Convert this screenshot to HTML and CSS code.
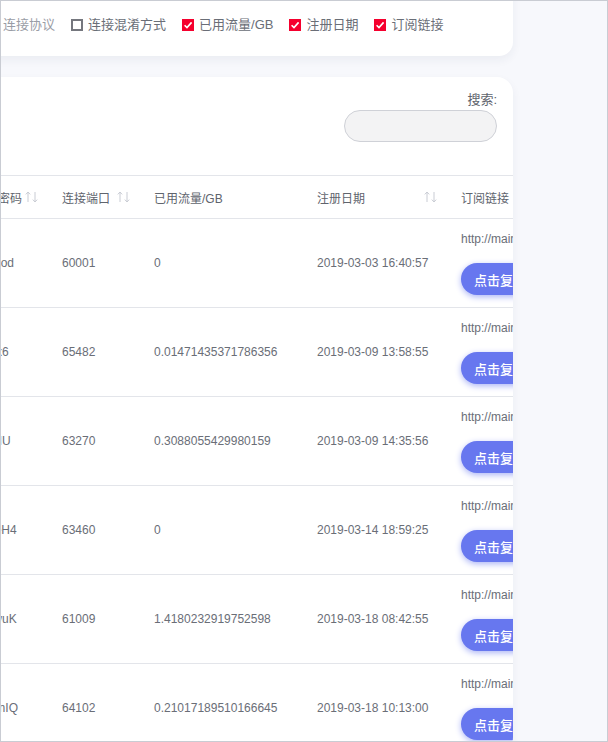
FILE: index.html
```html
<!DOCTYPE html>
<html lang="zh-CN">
<head>
  <meta charset="UTF-8">
  <meta name="viewport" content="width=device-width, initial-scale=1.0">
  <title>用户列表</title>
  <link rel="stylesheet" href="styles.css">
</head>
<body>

<div class="frame">
  <div class="main">

    <!-- 列显示开关 -->
    <div class="card card-filters">
      <div class="col-toggles">
        <label class="toggle muted">连接协议</label>
        <label class="toggle"><span class="box"></span>连接混淆方式</label>
        <label class="toggle"><span class="box checked"><svg width="12" height="12" viewBox="0 0 12 12"><polyline points="2.6,6.2 5,8.6 9.6,3.4" /></svg></span>已用流量/GB</label>
        <label class="toggle"><span class="box checked"><svg width="12" height="12" viewBox="0 0 12 12"><polyline points="2.6,6.2 5,8.6 9.6,3.4" /></svg></span>注册日期</label>
        <label class="toggle"><span class="box checked"><svg width="12" height="12" viewBox="0 0 12 12"><polyline points="2.6,6.2 5,8.6 9.6,3.4" /></svg></span>订阅链接</label>
      </div>
    </div>

    <!-- 用户表格 -->
    <div class="card card-table">
      <div class="search">
        <label for="search">搜索:</label>
        <input id="search" type="search" class="search-input">
      </div>

      <table class="user-table">
        <colgroup>
          <col class="c-pass">
          <col class="c-port">
          <col class="c-traffic">
          <col class="c-date">
          <col class="c-link">
        </colgroup>
        <thead>
          <tr>
            <th><div class="th-inner">连接密码<svg class="sort" width="13" height="12" viewBox="0 0 13 12"><path d="M3 11V1M0.8 3.4L3 1l2.2 2.4M10 1v10M7.8 8.6L10 11l2.2-2.4" /></svg></div></th>
            <th><div class="th-inner">连接端口<svg class="sort" width="13" height="12" viewBox="0 0 13 12"><path d="M3 11V1M0.8 3.4L3 1l2.2 2.4M10 1v10M7.8 8.6L10 11l2.2-2.4" /></svg></div></th>
            <th><div class="th-inner">已用流量/GB</div></th>
            <th><div class="th-inner">注册日期<svg class="sort" width="13" height="12" viewBox="0 0 13 12"><path d="M3 11V1M0.8 3.4L3 1l2.2 2.4M10 1v10M7.8 8.6L10 11l2.2-2.4" /></svg></div></th>
            <th><div class="th-inner">订阅链接</div></th>
          </tr>
        </thead>
        <tbody>
          <tr>
            <td>Zk3aod</td>
            <td>60001</td>
            <td>0</td>
            <td>2019-03-03 16:40:57</td>
            <td class="link-cell"><div class="link-text">http://main.ssrpanel.net/link/aX8dK2</div><button class="copy-btn">点击复制</button></td>
          </tr>
          <tr>
            <td>qH5x6</td>
            <td>65482</td>
            <td>0.01471435371786356</td>
            <td>2019-03-09 13:58:55</td>
            <td class="link-cell"><div class="link-text">http://main.ssrpanel.net/link/Qd71mZ</div><button class="copy-btn">点击复制</button></td>
          </tr>
          <tr>
            <td>Rf8vIU</td>
            <td>63270</td>
            <td>0.3088055429980159</td>
            <td>2019-03-09 14:35:56</td>
            <td class="link-cell"><div class="link-text">http://main.ssrpanel.net/link/Lk0pWe</div><button class="copy-btn">点击复制</button></td>
          </tr>
          <tr>
            <td>nT2eH4</td>
            <td>63460</td>
            <td>0</td>
            <td>2019-03-14 18:59:25</td>
            <td class="link-cell"><div class="link-text">http://main.ssrpanel.net/link/Tr4sHn</div><button class="copy-btn">点击复制</button></td>
          </tr>
          <tr>
            <td>Lc9wuK</td>
            <td>61009</td>
            <td>1.4180232919752598</td>
            <td>2019-03-18 08:42:55</td>
            <td class="link-cell"><div class="link-text">http://main.ssrpanel.net/link/Vb9yUo</div><button class="copy-btn">点击复制</button></td>
          </tr>
          <tr>
            <td>gS5mIQ</td>
            <td>64102</td>
            <td>0.21017189510166645</td>
            <td>2019-03-18 10:13:00</td>
            <td class="link-cell"><div class="link-text">http://main.ssrpanel.net/link/Md3cXa</div><button class="copy-btn">点击复制</button></td>
          </tr>
        </tbody>
      </table>
    </div>

  </div>
</div>

</body>
</html>
```

FILE: styles.css
```css
:root {
  --page-bg: #f7f8fc;
  --card-bg: #ffffff;
  --frame-line: #c9ccd3;
  --row-line: #e3e5ea;
  --text: #6a6e77;
  --text-head: #60646d;
  --muted: #9a9da6;
  --primary: #6777ef;
  --check-red: #f5002e;
}

* {
  margin: 0;
  padding: 0;
  box-sizing: border-box;
}

body {
  font-family: 'Liberation Sans', 'Noto Sans CJK SC', Arial, sans-serif;
  background: var(--page-bg);
  color: var(--text);
}

.frame {
  width: 608px;
  height: 742px;
  border: 1px solid var(--frame-line);
  background: var(--page-bg);
  overflow: hidden;
}

/* Seitenbereich ist nach links gescrollt */
.main {
  margin-left: -59px;
  width: 571px;
}

.card {
  background: var(--card-bg);
  border-radius: 14px;
  box-shadow: 0 4px 10px rgba(40, 50, 90, 0.06);
  overflow: hidden;
}

.card-filters {
  margin-top: -24px;
  padding: 38px 16px 21px 61px;
}

.col-toggles {
  display: flex;
  align-items: center;
  gap: 16px;
  font-size: 13px;
  line-height: 20px;
}

.toggle {
  display: flex;
  align-items: center;
  gap: 5px;
  white-space: nowrap;
}

.toggle.muted {
  color: var(--muted);
}

.box {
  width: 12px;
  height: 12px;
  border: 2px solid #75777e;
  background: #fff;
  display: inline-block;
}

.box.checked {
  border: none;
  background: var(--check-red);
}

.box svg {
  display: block;
}

.box polyline {
  fill: none;
  stroke: #fff;
  stroke-width: 1.6;
}

.card-table {
  margin-top: 21px;
  padding-top: 15px;
  border-radius: 16px;
}

.search {
  display: flex;
  flex-direction: column;
  align-items: flex-end;
  padding-right: 16px;
  font-size: 13px;
  line-height: 16px;
  color: var(--text-head);
}

.search-input {
  margin-top: 2px;
  width: 153px;
  height: 32px;
  border: 1px solid #cfd1d7;
  border-radius: 16px;
  background: #f3f3f4;
  outline: none;
}

.user-table {
  margin-top: 33px;
  margin-left: 16px;
  width: 707px;
  table-layout: fixed;
  border-collapse: collapse;
  font-size: 12px;
}

.c-pass { width: 88px; }
.c-port { width: 92px; }
.c-traffic { width: 163px; }
.c-date { width: 144px; }
.c-link { width: 220px; }

.user-table th {
  height: 43px;
  border-top: 1px solid var(--row-line);
  border-bottom: 1px solid var(--row-line);
  padding: 0 8px 0 16px;
  font-weight: normal;
  text-align: left;
  color: var(--text-head);
  white-space: nowrap;
}

.th-inner {
  display: flex;
  align-items: center;
  justify-content: space-between;
}

.sort path {
  fill: none;
  stroke: #c9ccd4;
  stroke-width: 1;
}

.user-table td {
  height: 89px;
  padding: 0 16px;
  border-bottom: 1px solid var(--row-line);
  white-space: nowrap;
  overflow: hidden;
  vertical-align: middle;
}

.user-table td.link-cell {
  vertical-align: top;
  padding-top: 10px;
}

.link-text {
  line-height: 20px;
  overflow: hidden;
}

.copy-btn {
  margin-top: 14px;
  height: 32px;
  padding: 0 13px;
  border: none;
  border-radius: 16px;
  background: var(--primary);
  color: #fff;
  font-family: inherit;
  font-size: 13px;
  font-weight: 500;
  box-shadow: 0 2px 6px #acb5f6;
  cursor: pointer;
}
```
